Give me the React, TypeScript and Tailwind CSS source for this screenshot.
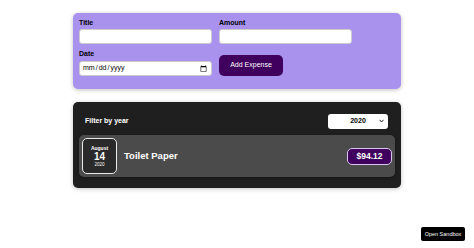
import React from 'react'

const font = { fontFamily: '"Liberation Sans", Arial, sans-serif' }

function NewExpense() {
  return (
    <div className="h-[76px] rounded-[5px] bg-[#a892ee] px-[6px] pt-[5px] shadow-[0_1px_4px_rgba(0,0,0,0.25)]">
      <div className="grid grid-cols-[133px_133px] gap-x-[7px]">
        <div className="flex flex-col">
          <label className="h-[9px] text-[7px] font-bold leading-[9px] text-black">Title</label>
          <input type="text" className="mt-[2px] h-[15px] rounded-[3px] border border-[#ccc] bg-white" />
        </div>
        <div className="flex flex-col">
          <label className="h-[9px] text-[7px] font-bold leading-[9px] text-black">Amount</label>
          <input type="number" className="mt-[2px] h-[15px] rounded-[3px] border border-[#ccc] bg-white" />
        </div>
        <div className="mt-[5px] flex flex-col">
          <label className="h-[9px] text-[7px] font-bold leading-[9px] text-black">Date</label>
          <input
            type="date"
            className="mt-[3px] h-[15px] rounded-[3px] border border-[#ccc] bg-white px-[2px] text-[7px] text-black"
          />
        </div>
        <div className="mt-[6px]">
          <button className="h-[21px] w-[64px] rounded-[5px] bg-[#40005d] text-[7px] text-white">
            Add Expense
          </button>
        </div>
      </div>
    </div>
  )
}

function ExpenseItem() {
  return (
    <div className="mt-[6px] flex h-[42px] items-center rounded-[5px] bg-[#4b4b4b] px-[3px] shadow-[0_1px_3px_rgba(0,0,0,0.3)]">
      <div className="flex h-[36px] w-[35px] flex-col items-center justify-center rounded-[5px] border border-[#ececec] bg-[#2a2a2a] text-white">
        <div className="text-[5px] font-bold leading-[6px]">August</div>
        <div className="text-[10px] font-bold leading-[11px]">14</div>
        <div className="text-[4.5px] leading-[6px]">2020</div>
      </div>
      <div className="ml-[7px] flex flex-1 items-center justify-between">
        <h2 className="text-[9.5px] font-bold text-white">Toilet Paper</h2>
        <div className="flex h-[17px] w-[45px] items-center justify-center rounded-[5px] border border-[#d9c8ee] bg-[#40005d] text-[8.5px] font-bold text-white">
          $94.12
        </div>
      </div>
    </div>
  )
}

export default function App() {
  return (
    <div className="relative h-[248px] w-[474px] overflow-hidden bg-white pt-[13px]" style={font}>
      <div className="mx-auto flex w-[328px] flex-col">
        <NewExpense />
        <div className="mt-[13px] h-[86px] rounded-[5px] bg-[#1f1f1f] px-[6px] pt-[12px] shadow-[0_1px_4px_rgba(0,0,0,0.25)]">
          <div className="flex h-[15px] items-center justify-between pl-[6px] pr-[7px]">
            <span className="text-[7px] font-bold text-white">Filter by year</span>
            <div className="relative flex h-[15px] w-[60px] items-center justify-center rounded-[3px] bg-white">
              <span className="text-[7px] font-bold text-black">2020</span>
              <svg className="absolute right-[4px] top-[5px]" width="5" height="4" viewBox="0 0 5 4">
                <path d="M0.5 0.8 L2.5 3 L4.5 0.8" stroke="#222" strokeWidth="1" fill="none" />
              </svg>
            </div>
          </div>
          <ExpenseItem />
        </div>
      </div>
      <div className="absolute left-[421px] top-[227px] flex h-[14px] w-[44px] items-center justify-center rounded-[2px] bg-black text-[5.5px] text-white">
        Open Sandbox
      </div>
    </div>
  )
}
